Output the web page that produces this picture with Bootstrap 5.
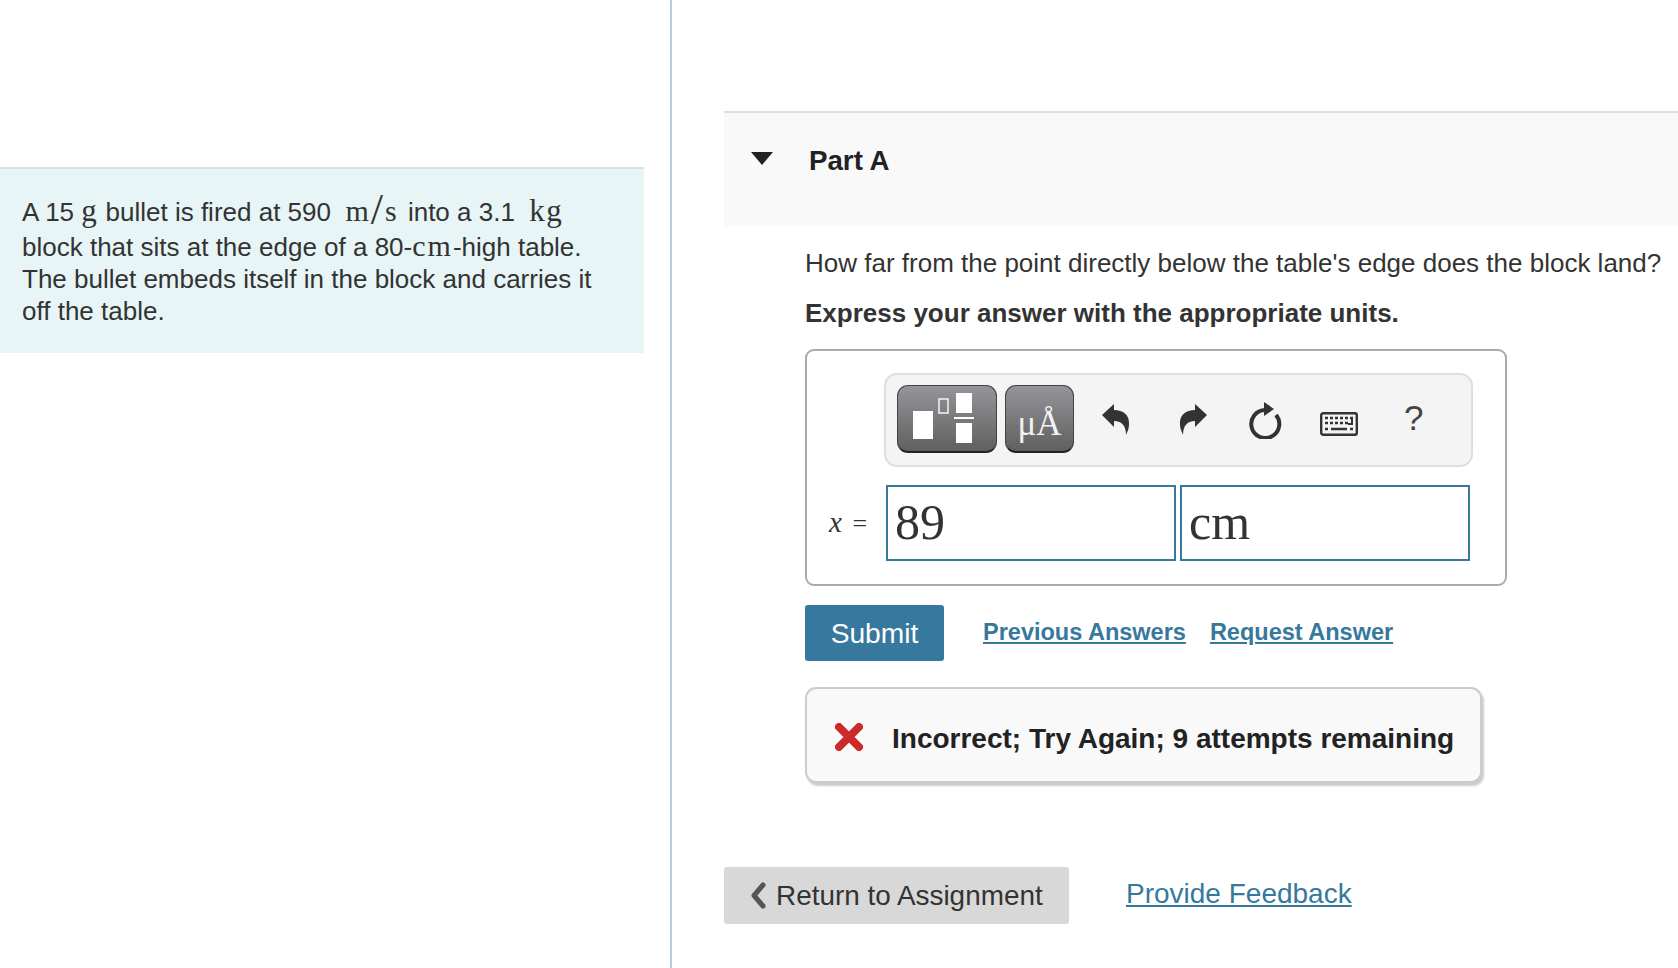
<!DOCTYPE html>
<html lang="en">
<head>
<meta charset="utf-8">
<title>Part A</title>
<link href="https://cdn.jsdelivr.net/npm/bootstrap@5.3.0/dist/css/bootstrap.min.css" rel="stylesheet">
<style>
html,body{height:968px;overflow:hidden}
body{font-family:"Liberation Sans",Arial,sans-serif;color:#333;background:#fff;font-size:26px}
.leftcol{width:672px;flex:none;height:968px;border-right:2px solid #bccbd8;padding-top:167px}
.intro{width:644px;height:186px;background:#e7f5f6;border-top:2px solid #d9e2e3;padding:22px 47px 0 22px;line-height:32px;margin:0;font-size:26px}
.mth{font-family:"Liberation Serif",serif;font-size:31px;line-height:40px;letter-spacing:1.5px}
.mth2{font-family:"Liberation Serif",serif;font-size:30px;line-height:30px;letter-spacing:2px}
.mths{letter-spacing:4px}
.slash{font-size:44px;line-height:30px;font-weight:400;letter-spacing:2px;vertical-align:-3px}
.rightcol{flex:1;min-width:0;padding-left:52px;padding-top:111px;overflow:hidden}
.parthead{height:115px;background:#f9f9f9;border-top:2px solid #dedede;padding:29px 0 0 27px;color:#222;font-size:27.7px;font-weight:700;line-height:38px}
.tri{width:22px;height:13px;margin-right:36px;margin-top:10px;display:block}
.partbody{padding-left:81px;padding-top:18px}
.q{margin:0;line-height:38px;white-space:nowrap}
.q2{font-weight:700;margin:12px 0 0;line-height:38px;white-space:nowrap}
.ansbox{width:702px;height:237px;margin-top:17px;border:2px solid #aaa;border-radius:9px;padding:22px 0 0 77px}
.tools{width:589px;height:94px;background:#f4f4f4;border:2px solid #dedede;border-radius:13px;padding:10px 0 0 11px}
.tbtn{height:68px;border-radius:11px;border:1px solid #444;border-bottom:2px solid #222;background:linear-gradient(#959499,#606060);padding:0;display:flex;align-items:center;justify-content:center}
.tb1{width:100px}
.tb2{width:69px;margin-left:8px;color:#f2f2f2;font-family:"Liberation Serif",serif;font-size:35px;line-height:1;padding-top:10px}
.tic{flex:none;display:block}
.qm{font-size:35px;color:#444;line-height:1}
.eqrow{margin-top:18px;margin-left:-55px}
.xeq{width:57px;font-family:"Liberation Serif",serif;font-size:26px;color:#333;white-space:nowrap;word-spacing:4px}
.xeq i{font-size:29px}
.fld{height:76px;width:290px;border:2px solid #36799c;border-radius:0;font-family:"Liberation Serif",serif;font-size:50px;line-height:70px;padding:0 7px;color:#333;background:#fff}
.fld2{margin-left:4px}
.actions{margin-top:19px}
.subbtn{width:139px;height:56px;background:#37799e;border:0;border-radius:3px;color:#fff;font-size:28.2px;padding:0;display:flex;align-items:center;justify-content:center}
.lnk{color:#36799c;font-weight:700;font-size:23.5px;text-decoration:underline}
.l1{margin-left:39px;margin-top:-1px}
.l2{margin-left:24px;margin-top:-1px}
.fb{width:677px;height:96px;margin-top:26px;background:#f9f9f9;border:2px solid #ccc;border-radius:11px;box-shadow:2px 3px 2px #ccc;padding:4px 0 0 28px;font-weight:700;font-size:28px;color:#222;white-space:nowrap}
.fbt{margin-top:4px}
.xic{margin-right:29px;display:block}
.bottomrow{margin-top:84px}
.retbtn{width:345px;height:57px;background:#d8d8d8;border:0;border-radius:3px;color:#333;font-size:27.9px;padding:0 0 0 26px;display:flex;align-items:center}
.chev{margin-right:10px;display:block}
.pfb{margin-left:57px;color:#36799c;font-size:28px;text-decoration:underline;margin-top:-4px}
</style>
</head>
<body class="m-0">
<div class="d-flex">
  <div class="leftcol">
    <p class="intro">A 15 <span class="mth">g</span> bullet is fired at 590 &nbsp;<span class="mth2">m<span class="slash">/</span><span class="mths">s</span></span> into a 3.1 &nbsp;<span class="mth">kg</span> block that sits at the edge of a 80-<span class="mth2">cm</span>-high table. The bullet embeds itself in the block and carries it off the table.</p>
  </div>
  <div class="rightcol">
    <div class="parthead d-flex align-items-start">
      <svg class="tri" viewBox="0 0 22 13"><path d="M0 0H22L11 13Z" fill="#222"/></svg>
      <span>Part A</span>
    </div>
    <div class="partbody">
      <p class="q">How far from the point directly below the table's edge does the block land?</p>
      <p class="q2">Express your answer with the appropriate units.</p>
      <div class="ansbox">
        <div class="tools d-flex align-items-start">
          <button class="btn tbtn tb1" type="button" aria-label="Templates">
            <svg width="98" height="66" viewBox="0 0 98 66"><g fill="#fff"><rect x="15" y="25" width="20" height="28"/><rect x="58" y="7" width="16" height="20"/><rect x="56" y="31" width="20" height="2"/><rect x="58" y="37" width="16" height="20"/></g><rect x="41" y="13" width="9" height="14" fill="none" stroke="#eee" stroke-width="1.6"/></svg>
          </button>
          <button class="btn tbtn tb2" type="button">μÅ</button>
          <svg class="tic" style="margin:19px 0 0 28px" width="28" height="31" viewBox="0 0 28 31"><path d="M0 11 12 0V6C21 6 28 11 27 21 27 25 25 28 24 31 24 22 20 17 12 17V23Z" fill="#333"/></svg>
          <svg class="tic" style="margin:19px 0 0 49px" width="28" height="31" viewBox="0 0 28 31"><path d="M28 11 16 0V6C7 6 0 11 1 21 1 25 3 28 4 31 4 22 8 17 16 17V23Z" fill="#333"/></svg>
          <svg class="tic" style="margin:16px 0 0 41px" width="34" height="38" viewBox="0 0 34 38"><path d="M28 14A14 14 0 1 1 17 9" fill="none" stroke="#333" stroke-width="4"/><path d="M16 1 26 8 16 15Z" fill="#333"/></svg>
          <svg class="tic" style="margin:27px 0 0 38px" width="38" height="24" viewBox="0 0 38 24"><rect x="1.2" y="1.2" width="35.6" height="21.6" rx="2" fill="none" stroke="#333" stroke-width="2.4"/><path d="M5 6h3M10 6h3M15 6h3M20 6h3M25 6h3M30 6h3M5 11h3M10 11h3M15 11h3M20 11h3M25 11h3M5 17h3M11 17h16M30 17h3" stroke="#333" stroke-width="2.6"/><path d="M32 5V12H28" fill="none" stroke="#333" stroke-width="2"/></svg>
          <span class="qm" style="margin:15px 0 0 46px">?</span>
        </div>
        <div class="eqrow d-flex align-items-center">
          <div class="xeq"><i>x</i> =</div>
          <div class="fld">89</div>
          <div class="fld fld2">cm</div>
        </div>
      </div>
      <div class="actions d-flex align-items-center">
        <button class="btn subbtn" type="button">Submit</button>
        <a class="lnk l1" href="#">Previous Answers</a>
        <a class="lnk l2" href="#">Request Answer</a>
      </div>
      <div class="fb d-flex align-items-center">
        <svg class="xic" width="28" height="28" viewBox="0 0 28 28"><path d="M4 4 24 24M24 4 4 24" stroke="#cc2a2a" stroke-width="8" stroke-linecap="round" stroke-linejoin="round"/></svg>
        <span class="fbt">Incorrect; Try Again; 9 attempts remaining</span>
      </div>
    </div>
    <div class="bottomrow d-flex align-items-center">
      <button class="btn retbtn" type="button">
        <svg class="chev" width="16" height="27" viewBox="0 0 16 27"><path d="M13 3 4 13.5 13 24" fill="none" stroke="#555" stroke-width="5" stroke-linecap="round" stroke-linejoin="round"/></svg>
        <span>Return to Assignment</span>
      </button>
      <a class="pfb" href="#">Provide Feedback</a>
    </div>
  </div>
</div>
<script src="https://cdn.jsdelivr.net/npm/bootstrap@5.3.0/dist/js/bootstrap.bundle.min.js"></script>
</body>
</html>
